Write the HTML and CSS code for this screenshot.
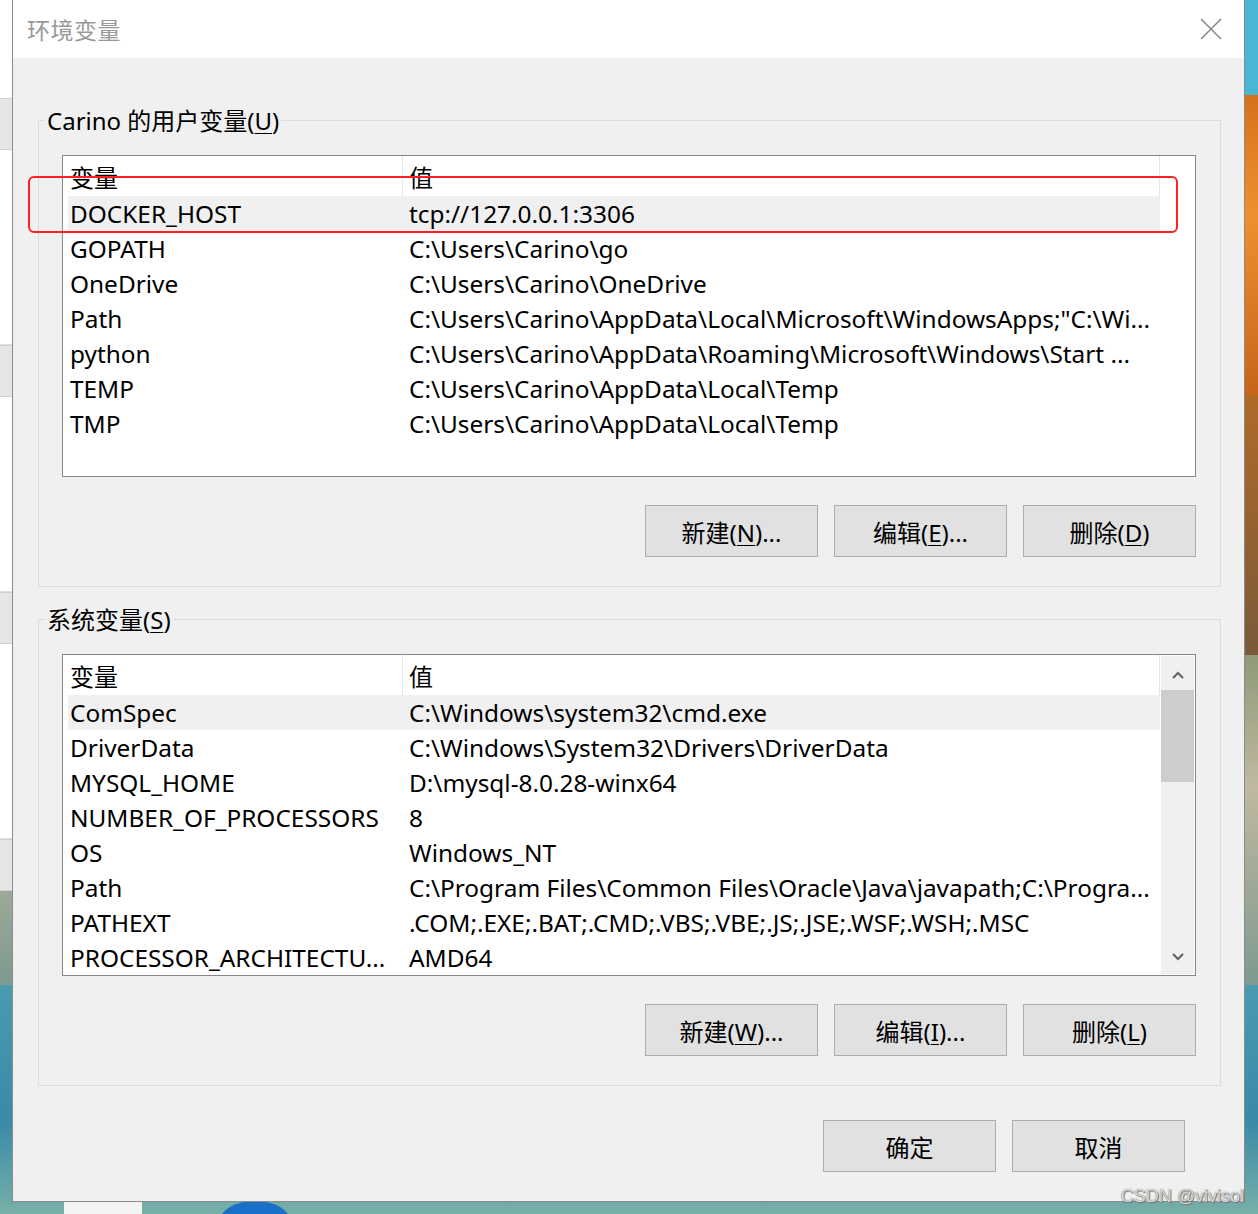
FILE: index.html
```html
<!DOCTYPE html>
<html lang="zh-CN">

<head>
    <meta charset="UTF-8">
    <meta name="viewport" content="width=device-width, initial-scale=1.0">
    <title>环境变量</title>
    <link rel="stylesheet" href="styles.css">
</head>

<body>
    <div class="desktop">
        <!-- 桌面壁纸 -->
        <div class="wallpaper">
            <div class="paper blue"></div>
            <div class="paper orange"></div>
            <div class="paper brown"></div>
            <div class="paper green"></div>
            <div class="paper sea"></div>
        </div>

        <!-- 后面的窗口 -->
        <div class="backWindow">
            <div class="band"></div>
            <div class="line"></div>
            <div class="band"></div>
            <div class="line"></div>
            <div class="band"></div>
            <div class="line"></div>
            <div class="band"></div>
        </div>
        <div class="taskIcon white"></div>
        <div class="taskIcon edge"></div>

        <!-- 对话框 -->
        <div class="dialog">
            <div class="titlebar">
                <span class="title">环境变量</span>
                <svg class="close" width="22" height="22" viewBox="0 0 22 22">
                    <path d="M1 1 L21 21 M21 1 L1 21" stroke="#8a8a8a" stroke-width="1.6" fill="none" />
                </svg>
            </div>

            <div class="dialogBody">
                <fieldset class="group">
                    <legend>Carino 的用户变量(<u>U</u>)</legend>
                    <div class="groupInner">
                        <div class="list">
                            <div class="listContent">
                                <div class="listHeader">
                                    <div class="colName">变量</div>
                                    <div class="colValue">值</div>
                                </div>
                                <div class="row selected"><div class="cellName">DOCKER_HOST</div><div class="cellValue">tcp://127.0.0.1:3306</div></div>
                                <div class="row"><div class="cellName">GOPATH</div><div class="cellValue">C:\Users\Carino\go</div></div>
                                <div class="row"><div class="cellName">OneDrive</div><div class="cellValue">C:\Users\Carino\OneDrive</div></div>
                                <div class="row"><div class="cellName">Path</div><div class="cellValue">C:\Users\Carino\AppData\Local\Microsoft\WindowsApps;"C:\Wi...</div></div>
                                <div class="row"><div class="cellName">python</div><div class="cellValue">C:\Users\Carino\AppData\Roaming\Microsoft\Windows\Start ...</div></div>
                                <div class="row"><div class="cellName">TEMP</div><div class="cellValue">C:\Users\Carino\AppData\Local\Temp</div></div>
                                <div class="row"><div class="cellName">TMP</div><div class="cellValue">C:\Users\Carino\AppData\Local\Temp</div></div>
                            </div>
                        </div>
                        <div class="buttons">
                            <button class="btn">新建(<u>N</u>)...</button>
                            <button class="btn">编辑(<u>E</u>)...</button>
                            <button class="btn">删除(<u>D</u>)</button>
                        </div>
                    </div>
                </fieldset>

                <fieldset class="group second">
                    <legend>系统变量(<u>S</u>)</legend>
                    <div class="groupInner">
                        <div class="list">
                            <div class="listContent">
                                <div class="listHeader">
                                    <div class="colName">变量</div>
                                    <div class="colValue">值</div>
                                </div>
                                <div class="row selected"><div class="cellName">ComSpec</div><div class="cellValue">C:\Windows\system32\cmd.exe</div></div>
                                <div class="row"><div class="cellName">DriverData</div><div class="cellValue">C:\Windows\System32\Drivers\DriverData</div></div>
                                <div class="row"><div class="cellName">MYSQL_HOME</div><div class="cellValue">D:\mysql-8.0.28-winx64</div></div>
                                <div class="row"><div class="cellName">NUMBER_OF_PROCESSORS</div><div class="cellValue">8</div></div>
                                <div class="row"><div class="cellName">OS</div><div class="cellValue">Windows_NT</div></div>
                                <div class="row"><div class="cellName">Path</div><div class="cellValue">C:\Program Files\Common Files\Oracle\Java\javapath;C:\Progra...</div></div>
                                <div class="row"><div class="cellName">PATHEXT</div><div class="cellValue">.COM;.EXE;.BAT;.CMD;.VBS;.VBE;.JS;.JSE;.WSF;.WSH;.MSC</div></div>
                                <div class="row"><div class="cellName">PROCESSOR_ARCHITECTU...</div><div class="cellValue">AMD64</div></div>
                            </div>
                            <div class="scrollbar">
                                <svg class="arrow" width="14" height="10" viewBox="0 0 14 10">
                                    <path d="M2 8 L7 3 L12 8" stroke="#606060" stroke-width="2" fill="none" />
                                </svg>
                                <div class="track">
                                    <div class="thumb"></div>
                                </div>
                                <svg class="arrow" width="14" height="10" viewBox="0 0 14 10">
                                    <path d="M2 2 L7 7 L12 2" stroke="#606060" stroke-width="2" fill="none" />
                                </svg>
                            </div>
                        </div>
                        <div class="buttons">
                            <button class="btn">新建(<u>W</u>)...</button>
                            <button class="btn">编辑(<u>I</u>)...</button>
                            <button class="btn">删除(<u>L</u>)</button>
                        </div>
                    </div>
                </fieldset>

                <div class="footer">
                    <button class="btn">确定</button>
                    <button class="btn">取消</button>
                </div>
            </div>

            <!-- 红框标注 -->
            <div class="mark"></div>
        </div>

        <div class="watermark">CSDN @vivisol</div>
    </div>
</body>

</html>
```

FILE: styles.css
```css
* {
    box-sizing: border-box;
}

body {
    margin: 0;
    padding: 0;
    font-family: "Noto Sans", "Noto Sans CJK SC", sans-serif;
    overflow: hidden;
}

.desktop {
    width: 1258px;
    height: 1214px;
    position: relative;
    overflow: hidden;
    background-color: #3a8aa8;
}

/* 壁纸 */
.wallpaper {
    display: flex;
    flex-direction: column;
    height: 100%;
}

.paper.blue {
    height: 95px;
    background-color: #4ab6d6;
}

.paper.orange {
    height: 300px;
    background: linear-gradient(180deg, #d8701c, #ee9030 40%, #c8641a);
}

.paper.brown {
    height: 260px;
    background: linear-gradient(180deg, #b06a28, #7a5a3a);
}

.paper.green {
    height: 330px;
    background: linear-gradient(180deg, #8e9a7a, #c0b8a0 40%, #7e9a90);
}

.paper.sea {
    flex: 1;
    background: linear-gradient(180deg, #4a9ab0, #3a8aa8 60%, #78b0a8);
}

/* 后面的窗口 */
.backWindow {
    position: absolute;
    left: 0;
    top: 0;
    width: 60px;
    height: 885px;
    background-color: #fff;
    padding-top: 98px;
}

.backWindow .band {
    height: 52px;
    background-color: #e6e6e6;
    border-top: 1px solid #d0d0d0;
    border-bottom: 1px solid #d0d0d0;
}

.backWindow .line {
    height: 195px;
    border-bottom: 1px solid #e0e0e0;
}

.taskIcon {
    position: absolute;
    top: 1201px;
}

.taskIcon.white {
    left: 64px;
    width: 78px;
    height: 20px;
    background-color: #f4f4f4;
}

.taskIcon.edge {
    left: 220px;
    width: 70px;
    height: 40px;
    border-radius: 50%;
    background-color: #1a6fc8;
}

/* 对话框 */
.dialog {
    position: absolute;
    left: 12px;
    top: 0;
    width: 1233px;
    height: 1202px;
    background-color: #f0f0f0;
    border: 1px solid #8a8a8a;
    border-top: none;
}

.titlebar {
    height: 58px;
    background-color: #fff;
    display: flex;
    align-items: center;
    justify-content: space-between;
    padding: 0 22px 0 14px;
}

.title {
    font-size: 23px;
    color: #999;
    letter-spacing: 0.5px;
}

.close {
    display: block;
    margin-top: -1px;
}

.dialogBody {
    padding: 47px 23px 0 25px;
}

.group {
    margin: 0;
    padding: 0;
    border: 1px solid #dcdcdc;
    min-width: 0;
}

.group.second {
    margin-top: 17px;
}

.group legend {
    margin-left: 6px;
    padding: 2px 2px 0;
    font-size: 24px;
    line-height: 28px;
    color: #000;
}

.groupInner {
    padding: 0 24px 29px 23px;
}

u {
    text-decoration-thickness: 1px;
    text-underline-offset: 3px;
}

.list {
    margin-top: 20px;
    height: 322px;
    background-color: #fff;
    border: 1px solid #828790;
    display: flex;
    overflow: hidden;
}

.listContent {
    width: 1097px;
    flex-shrink: 0;
}

.listHeader {
    display: flex;
    height: 40px;
    font-size: 24px;
}

.colName {
    width: 340px;
    padding-left: 7px;
    border-right: 1px solid #e5e5e5;
    line-height: 44px;
}

.colValue {
    flex: 1;
    padding-left: 6px;
    border-right: 1px solid #e5e5e5;
    line-height: 44px;
}

.row {
    display: flex;
    height: 35px;
    margin-left: 5px;
    font-size: 24.4px;
    line-height: 35px;
    white-space: nowrap;
}

.row.selected {
    background-color: #f0f0f0;
}

.cellName {
    width: 335px;
    padding-left: 2px;
}

.cellValue {
    flex: 1;
    padding-left: 6px;
    overflow: hidden;
}

/* 滚动条 */
.scrollbar {
    flex: 1;
    margin: 1px;
    background-color: #f0f0f0;
    display: flex;
    flex-direction: column;
    align-items: center;
}

.scrollbar .arrow {
    display: block;
    margin: 14px 0 10px;
}

.scrollbar .arrow:last-child {
    margin: 10px 0 12px;
}

.track {
    flex: 1;
    width: 100%;
}

.thumb {
    height: 92px;
    background-color: #cdcdcd;
}

/* 按钮 */
.buttons {
    display: flex;
    justify-content: flex-end;
    gap: 16px;
    margin-top: 28px;
}

.btn {
    width: 173px;
    height: 52px;
    background-color: #e1e1e1;
    border: 1px solid #adadad;
    font-family: "Noto Sans", "Noto Sans CJK SC", sans-serif;
    font-size: 24px;
    color: #000;
    padding: 0;
}

.footer {
    display: flex;
    justify-content: flex-end;
    gap: 16px;
    margin-top: 34px;
    padding-right: 36px;
}

/* 红框 */
.mark {
    position: absolute;
    left: 15px;
    top: 176px;
    width: 1150px;
    height: 57px;
    border: 2px solid #ff2020;
    border-radius: 6px;
}

.watermark {
    position: absolute;
    right: 14px;
    bottom: 7px;
    font-family: "Liberation Sans", sans-serif;
    font-size: 18px;
    color: rgba(240, 240, 240, 0.85);
    text-shadow: 0 0 1px #555, 1px 1px 1px #777;
}
```
